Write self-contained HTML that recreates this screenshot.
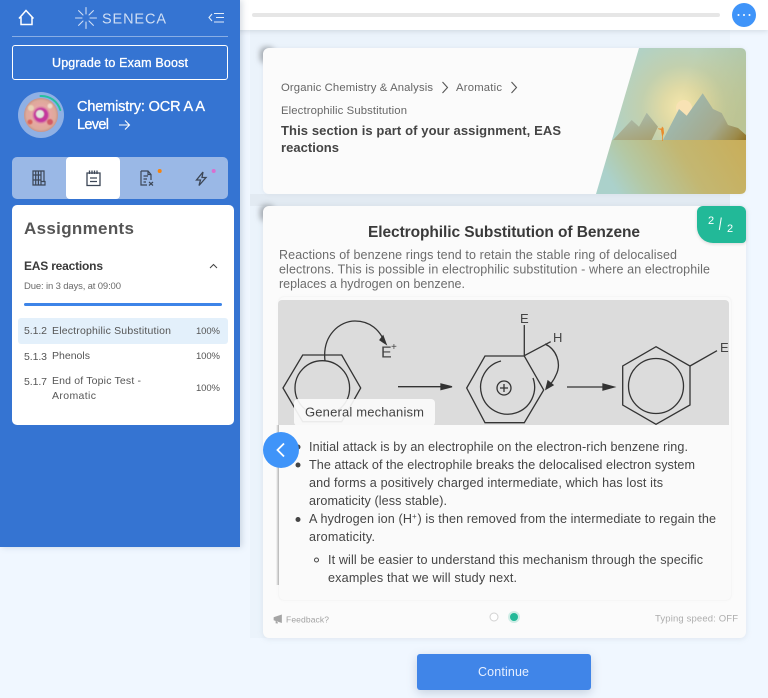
<!DOCTYPE html>
<html><head><meta charset="utf-8">
<style>
html,body{margin:0;padding:0;width:768px;height:698px;overflow:hidden;background:#f0f7ff}
body{position:relative;font-family:"Liberation Sans",sans-serif}
.a{position:absolute}
svg{position:absolute;left:0;top:0}
text{font-family:"Liberation Sans",sans-serif}
</style></head><body>
<div class="a" style="left:250px;top:30px;width:480px;height:608px;background:#ebf3fb"></div>
<div class="a" style="left:250px;top:194px;width:480px;height:12px;background:#e2eaf2"></div>
<div class="a" style="left:260px;top:47px;width:14px;height:16px;background:rgba(105,110,115,.55);border-radius:5px;filter:blur(3px)"></div>
<div class="a" style="left:260px;top:205px;width:14px;height:16px;background:rgba(105,110,115,.55);border-radius:5px;filter:blur(3px)"></div>
<div class="a" style="left:0;top:0;width:768px;height:30px;background:#fff;box-shadow:0 1px 5px rgba(100,110,120,.22)"></div>
<div class="a" style="left:252px;top:13px;width:468px;height:4px;border-radius:2px;background:#e6e6e6"></div>
<div class="a" style="left:732px;top:3px;width:24px;height:24px;border-radius:50%;background:#3f94f9"></div>
<div class="a" style="left:263px;top:48px;width:483px;height:146px;background:#fbfbfb;border-radius:6px;box-shadow:0 0 4px rgba(150,160,170,.15)"></div>
<div class="a" style="left:263px;top:206px;width:483px;height:432px;background:#fbfbfb;border-radius:6px;box-shadow:0 1px 6px rgba(150,160,170,.2)"></div>
<div class="a" style="left:279px;top:297px;width:452px;height:303px;background:#fafafa;border-radius:5px;box-shadow:0 0 2px rgba(200,200,200,.3)"></div>
<div class="a" style="left:276px;top:425px;width:3px;height:160px;background:linear-gradient(90deg,rgba(150,150,150,0),#b4b4b4)"></div>
<div class="a" style="left:278px;top:300px;width:451px;height:125px;background:#dcdcdc;border-radius:4px 4px 0 0"></div>
<div class="a" style="left:697px;top:206px;width:49px;height:37px;background:#22b998;border-radius:6px 6px 4px 16px;box-shadow:0 1px 3px rgba(0,0,0,.15)"></div>
<div class="a" style="left:417px;top:654px;width:174px;height:36px;background:#4085e8;border-radius:3px;box-shadow:0 3px 10px rgba(90,110,140,.28)"></div>
<div class="a" style="left:0;top:0;width:240px;height:547px;background:#3574d2;box-shadow:2px 0 6px rgba(90,110,140,.25)"></div>
<div class="a" style="left:12px;top:36px;width:216px;height:1px;background:rgba(255,255,255,.42)"></div>
<div class="a" style="left:12px;top:45px;width:214px;height:33px;border:1.5px solid #fff;border-radius:3px"></div>
<div class="a" style="left:12px;top:157px;width:216px;height:42px;background:#9ab8e6;border-radius:5px"></div>
<div class="a" style="left:66px;top:157px;width:54px;height:42px;background:#fff;border-radius:4px"></div>
<div class="a" style="left:12px;top:205px;width:222px;height:220px;background:#fff;border-radius:5px"></div>
<div class="a" style="left:24px;top:303px;width:198px;height:3px;background:#3d84e8;border-radius:2px"></div>
<div class="a" style="left:18px;top:318px;width:210px;height:26px;background:#e3f0fb;border-radius:3px"></div>

<svg width="768" height="698" viewBox="0 0 768 698">
<defs>
<clipPath id="ill"><path d="M639 48H740Q746 48 746 54V188Q746 194 740 194H596Z"/></clipPath>
<radialGradient id="sky" gradientUnits="userSpaceOnUse" cx="684" cy="108" r="85"><stop offset="0" stop-color="#f8e8ac"/><stop offset=".25" stop-color="#e0daa5"/><stop offset=".5" stop-color="#c2d0ae"/><stop offset="1" stop-color="#aad2cf"/></radialGradient>
<linearGradient id="sky2" gradientUnits="userSpaceOnUse" x1="690" y1="70" x2="750" y2="90"><stop offset="0" stop-color="#bdb974" stop-opacity="0"/><stop offset="1" stop-color="#bdb974" stop-opacity=".55"/></linearGradient>
<linearGradient id="gnd" gradientUnits="userSpaceOnUse" x1="740" y1="135" x2="625" y2="205"><stop offset="0" stop-color="#c9ae5a"/><stop offset=".45" stop-color="#c3b772"/><stop offset=".8" stop-color="#b4c8a4"/><stop offset="1" stop-color="#abd1cb"/></linearGradient>
<linearGradient id="mtn" gradientUnits="userSpaceOnUse" x1="690" y1="98" x2="745" y2="142"><stop offset="0" stop-color="#9fb8ad"/><stop offset=".55" stop-color="#a5a98c"/><stop offset=".85" stop-color="#9c8a4a"/><stop offset="1" stop-color="#8f7020"/></linearGradient>
<linearGradient id="mtn2" gradientUnits="userSpaceOnUse" x1="640" y1="112" x2="650" y2="142"><stop offset="0" stop-color="#a9baab"/><stop offset="1" stop-color="#a8a070"/></linearGradient>
<radialGradient id="pic" cx=".5" cy=".5" r=".5"><stop offset="0" stop-color="#d8e2d8"/><stop offset=".25" stop-color="#c23fa0"/><stop offset=".55" stop-color="#e6a8a4"/><stop offset=".85" stop-color="#dea99a"/><stop offset="1" stop-color="#c8958a"/></radialGradient>
<clipPath id="imgc"><rect x="278" y="300" width="451" height="125"/></clipPath>
<filter id="soft"><feGaussianBlur stdDeviation=".6"/></filter>
</defs>

<g fill="#fff">
<circle cx="738.500" cy="15" r="1"/><circle cx="744" cy="15" r="1"/><circle cx="749.500" cy="15" r="1"/>
</g>

<!-- sidebar head -->
<path d="M19 18.500 26 10.500 33.500 18.500M21 17V24.500H32V17" fill="none" stroke="#fff" stroke-width="1.500"/>
<g stroke="#cfdef4" stroke-width="1.100" stroke-linecap="round">
<path d="M86 7.500V14M86 22V28.500M75.500 18H82M90 18H96.500M78.600 10.600 83 15M89 21 93.400 25.400M93.400 10.600 89 15M83 21 78.600 25.400"/>
</g>
<text x="102" y="23.500" font-size="14.500" fill="#cfdef4" textLength="64">SENECA</text>
<path d="M212 14 209 17.500 212 21M214 13.500H224M216 17.500H224M214 22H224" fill="none" stroke="#e4edf9" stroke-width="1.100"/>
<text x="52" y="67" font-size="12.500" fill="#fff" stroke="#fff" stroke-width=".3" textLength="136">Upgrade to Exam Boost</text>

<!-- avatar -->
<circle cx="41" cy="115" r="23" fill="#8fb0e4"/>
<circle cx="41" cy="115" r="17" fill="url(#pic)"/>
<g filter="url(#soft)">
<circle cx="41" cy="115" r="7" fill="#c4399d"/><circle cx="40" cy="114" r="4" fill="#e2e6dc"/>
<circle cx="31" cy="108" r="3" fill="#e8d3b4"/><circle cx="50" cy="122" r="3" fill="#cf5a68"/><circle cx="30" cy="122" r="2.500" fill="#d8645c"/><circle cx="50" cy="106" r="2.500" fill="#f0d9c8"/>
</g>
<path d="M40.500 96A19.500 19.500 0 0 1 60.300 110" fill="none" stroke="#26c1a0" stroke-width="2" stroke-linecap="round"/>
<text x="77" y="111" font-size="14.500" fill="#fff" stroke="#fff" stroke-width=".3" textLength="128">Chemistry: OCR A A</text>
<text x="77" y="129" font-size="14.500" fill="#fff" stroke="#fff" stroke-width=".3" textLength="32">Level</text>
<path d="M119 125H129.500M125 120.500 129.500 125 125 129.500" fill="none" stroke="#fff" stroke-width="1.100"/>

<!-- tab icons -->
<g fill="none" stroke="#3c4656" stroke-width="1.200">
<path d="M33 171H41V185H33ZM35.700 171V185M38.400 171V185M33 175H41M33 180H41M41 171H44V181M41 181.500H45V185H41"/>
<path d="M87 173H100V185.500H87ZM89.500 170.500V174M92 170.500V174M94.500 170.500V174M97 170.500V174" stroke-width="1.300"/>
<path d="M90 178H97M90 181.500H97" stroke-width="1.300"/>
<path d="M141 171H148L151 174.500V180M141 171V185H147M148 171V174.500H151M143.500 176H148M143.500 179H147M143.500 182H146"/>
<path d="M149 182 153 185.500M153 182 149 185.500"/>
<path d="M203 172 196.500 180H200.500L199 185.500 206 177.500H202Z" stroke-width="1.300"/>
</g>
<circle cx="159.700" cy="171" r="2" fill="#f5830f"/>
<circle cx="213.700" cy="171" r="2" fill="#d96fd0"/>

<!-- assignments -->
<text x="24" y="234" font-size="17" font-weight="bold" fill="#555" textLength="110">Assignments</text>
<text x="24" y="270" font-size="12" font-weight="bold" fill="#3a3a3a" textLength="79">EAS reactions</text>
<path d="M210 268 213.500 264.500 217 268" fill="none" stroke="#444" stroke-width="1"/>
<text x="24" y="289" font-size="9.500" fill="#6a6a6a" textLength="97">Due: in 3 days, at 09:00</text>
<g font-size="10.500" fill="#555">
<text x="24" y="334" textLength="23">5.1.2</text>
<text x="52" y="334" textLength="119">Electrophilic Substitution</text>
<text x="196" y="334" textLength="24" font-size="9.500">100%</text>
<text x="24" y="360" textLength="23">5.1.3</text>
<text x="52" y="359" textLength="38">Phenols</text>
<text x="196" y="359" textLength="24" font-size="9.500">100%</text>
<text x="24" y="385" textLength="23">5.1.7</text>
<text x="52" y="384" textLength="89">End of Topic Test -</text>
<text x="52" y="399" textLength="44">Aromatic</text>
<text x="196" y="391" textLength="24" font-size="9.500">100%</text>
</g>

<!-- section card -->
<g font-size="11.300" fill="#666">
<text x="281" y="91" textLength="152">Organic Chemistry &amp; Analysis</text>
<text x="456" y="91" textLength="46">Aromatic</text>
<text x="281" y="114" textLength="126">Electrophilic Substitution</text>
</g>
<path d="M442.500 82 447.500 87.500 442.500 93M511.500 82 516.500 87.500 511.500 93" fill="none" stroke="#555" stroke-width="1.100"/>
<text x="281" y="135" font-size="13" font-weight="bold" fill="#444" textLength="280">This section is part of your assignment, EAS</text>
<text x="281" y="152" font-size="13" font-weight="bold" fill="#444" textLength="58">reactions</text>

<!-- illustration -->
<g clip-path="url(#ill)">
<rect x="590" y="48" width="160" height="92" fill="url(#sky)"/>
<rect x="590" y="48" width="160" height="92" fill="url(#sky2)"/>
<rect x="590" y="140" width="160" height="54" fill="url(#gnd)"/>
<circle cx="684" cy="108" r="8" fill="#f8e2b4"/>
<path d="M613 140 631.700 120 639 126.700 646.700 112.700 658 126.700 651.700 140Z" fill="url(#mtn2)"/>
<path d="M663 140 679 109 686.700 115.700 702.700 93.300 713 109 721.700 113 728 125 738 128 746 135V140Z" fill="url(#mtn)"/>
<path d="M658 128.500H661.500L662 126.500 663.500 128 664 133 662.800 136V141H662V136L661 130 658 129Z" fill="#e98b2c"/>
</g>

<!-- main card -->
<text x="368" y="237" font-size="15.500" font-weight="bold" fill="#3a3a3a" textLength="272">Electrophilic Substitution of Benzene</text>
<g font-size="12.500" fill="#6c6c6c">
<text x="279" y="259" textLength="398">Reactions of benzene rings tend to retain the stable ring of delocalised</text>
<text x="279" y="273.500" textLength="431">electrons. This is possible in electrophilic substitution - where an electrophile</text>
<text x="279" y="288" textLength="186">replaces a hydrogen on benzene.</text>
</g>
<text x="708" y="224" font-size="11" fill="#fff">2</text>
<path d="M719.300 230 721.300 217.500" stroke="#fff" stroke-width="1" fill="none"/>
<text x="727" y="232" font-size="11" fill="#fff">2</text>

<!-- chemistry image -->
<g clip-path="url(#imgc)" fill="none" stroke="#333" stroke-width="1.300">
<path d="M283 388 302.700 355H341.700L360.700 388 341.700 421.700H302.700Z"/>
<circle cx="322.300" cy="388" r="27.300"/>
<path d="M325 361C322 335 340 321 355 321 370 321 380 330 385 343"/>
<path d="M383 336 386 344 380 340Z" fill="#333"/>
<path d="M398 386.700H448"/><path d="M441 384 452 386.700 441 389.500Z" fill="#333"/>
<path d="M466.700 388 485 356H524.300L543.700 390 524.300 422.700H485Z"/>
<path d="M501 361A27 27 0 1 0 533 378"/>
<circle cx="504" cy="388" r="7"/><path d="M500 388H508M504 384V392"/>
<path d="M524.300 355.700V325M524.300 355.700 550.700 341.700"/>
<path d="M545 344C556 349 562 363 556 375 554 380 551 384 547 388"/>
<path d="M546 389 548 381 553 385Z" fill="#333"/>
<path d="M567 387H610"/><path d="M603 384 614 387 603 390Z" fill="#333"/>
<path d="M656 346.700 690 366V405L656 424.300 622.700 405V366Z"/>
<circle cx="656" cy="386" r="27.500"/>
<path d="M690 366 717 350.700"/>
</g>
<g fill="#444">
<text x="381" y="357.500" font-size="16" textLength="13">E</text>
<text x="391" y="350" font-size="10">+</text>
<text x="520" y="323" font-size="13">E</text>
<text x="553" y="342" font-size="13">H</text>
<text x="720" y="352" font-size="13">E</text>
</g>
<rect x="294" y="399" width="141" height="27" rx="4" fill="#fafafa" fill-opacity=".93"/>
<text x="305" y="416.500" font-size="13" fill="#444" textLength="119">General mechanism</text>

<!-- bullets -->
<g font-size="12.600" fill="#454545">
<circle cx="298" cy="447" r="2.500"/><circle cx="298" cy="465" r="2.500"/><circle cx="298" cy="519.500" r="2.500"/>
<circle cx="316.500" cy="560" r="2" fill="none" stroke="#454545" stroke-width="1"/>
<text x="309" y="451" textLength="379">Initial attack is by an electrophile on the electron-rich benzene ring.</text>
<text x="309" y="469" textLength="386">The attack of the electrophile breaks the delocalised electron system</text>
<text x="309" y="487" textLength="354">and forms a positively charged intermediate, which has lost its</text>
<text x="309" y="505" textLength="138">aromaticity (less stable).</text>
<text x="309" y="523" textLength="103">A hydrogen ion (H</text>
<text x="412" y="519" font-size="8">+</text>
<text x="417.500" y="523" textLength="298.500">) is then removed from the intermediate to regain the</text>
<text x="309" y="541" textLength="66">aromaticity.</text>
<text x="328" y="564" textLength="375">It will be easier to understand this mechanism through the specific</text>
<text x="328" y="582" textLength="189">examples that we will study next.</text>
</g>

<circle cx="281" cy="450" r="18" fill="#3f94f9"/>
<path d="M284 443.500 277.500 450 284 456.500" fill="none" stroke="#fff" stroke-width="1.800"/>

<!-- footer -->
<path d="M274 617.500 281.500 615V622.500L274 620ZM276 620.500V623H278" fill="#a5a5a5" stroke="#a5a5a5" stroke-width=".7"/>
<text x="286" y="622.500" font-size="8.500" fill="#a2a2a2" textLength="43">Feedback?</text>
<text x="655" y="621.500" font-size="9.500" fill="#adadad" textLength="83">Typing speed: OFF</text>
<circle cx="494" cy="617" r="4" fill="#fff" stroke="#d2d2d2"/>
<circle cx="514" cy="617" r="6" fill="#22b998" fill-opacity=".2"/>
<circle cx="514" cy="617" r="4" fill="#22b998"/>
<text x="478" y="676" font-size="12.500" fill="#e6efff" textLength="51">Continue</text>
</svg>
</body></html>
